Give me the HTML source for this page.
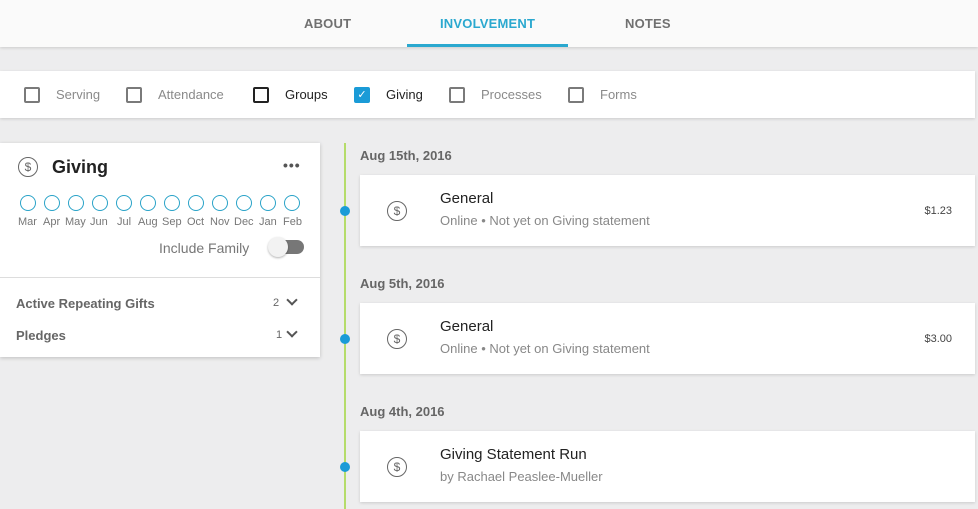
<!DOCTYPE html>
<html><head><style>
*{margin:0;padding:0;box-sizing:border-box}
body{width:978px;height:509px;overflow:hidden;background:#ededee;font-family:"Liberation Sans",sans-serif;position:relative;color:#333}
.abs{position:absolute}
.hdr{left:0;top:0;width:978px;height:47px;background:#fafafa;box-shadow:0 1px 3px rgba(0,0,0,.15)}
.tab{top:16px;font-size:13px;font-weight:bold;color:#707070;letter-spacing:.2px}
.bar{left:0;top:71px;width:975px;height:47px;background:#fff;box-shadow:0 1px 3px rgba(0,0,0,.15)}
.cb{top:87px;width:16px;height:16px;border:2px solid #7a7a7a;border-radius:2px}
.lb{top:87px;font-size:13px;color:#8a8a8a}
.card{left:0;top:143px;width:320px;height:214px;background:#fff;box-shadow:0 1px 4px rgba(0,0,0,.2)}
.dol{width:20px;height:20px;border:1.3px solid #666;border-radius:50%;font-size:12px;line-height:18px;text-align:center;color:#666}
.circ{top:195px;width:16px;height:16px;border:1.5px solid #2aa3c8;border-radius:50%}
.mo{top:216px;font-size:11px;color:#777}
.ev{left:360px;width:615px;height:71px;background:#fff;box-shadow:0 1px 3px rgba(0,0,0,.15)}
.date{left:360px;font-size:13px;font-weight:bold;color:#666}
.dot{left:340px;width:10px;height:10px;border-radius:50%;background:#1a9bd7}
.t1{left:80px;top:15px;font-size:15px;color:#222}
.t2{left:80px;top:38px;font-size:13px;color:#888}
.amt{right:23px;top:30px;font-size:11px;color:#444}
.chev{width:8px;height:8px;border-right:2px solid #555;border-bottom:2px solid #555;transform:rotate(45deg)}
</style></head><body>
<div class="abs hdr"></div>
<div class="abs tab" style="left:304px">ABOUT</div>
<div class="abs tab" style="left:440px;color:#2aa8cf">INVOLVEMENT</div>
<div class="abs tab" style="left:625px">NOTES</div>
<div class="abs" style="left:407px;top:44px;width:161px;height:3px;background:#2aa8cf"></div>

<div class="abs bar"></div>
<div class="abs cb" style="left:24px"></div><div class="abs lb" style="left:56px">Serving</div>
<div class="abs cb" style="left:126px"></div><div class="abs lb" style="left:158px">Attendance</div>
<div class="abs cb" style="left:253px;border-color:#222"></div><div class="abs lb" style="left:285px;color:#222">Groups</div>
<div class="abs cb" style="left:354px;background:#1a9bd7;border-color:#1a9bd7;color:#fff;font-size:11px;line-height:12px;text-align:center">✓</div><div class="abs lb" style="left:386px;color:#222">Giving</div>
<div class="abs cb" style="left:449px"></div><div class="abs lb" style="left:481px">Processes</div>
<div class="abs cb" style="left:568px"></div><div class="abs lb" style="left:600px">Forms</div>

<div class="abs card"></div>
<div class="abs dol" style="left:18px;top:157px">$</div>
<div class="abs" style="left:52px;top:157px;font-size:18px;font-weight:bold;color:#222">Giving</div>
<div class="abs" style="left:283px;top:157px;font-size:14px;font-weight:bold;color:#555;letter-spacing:1px">•••</div>
<div class="abs circ" style="left:20px"></div><div class="abs circ" style="left:44px"></div><div class="abs circ" style="left:68px"></div><div class="abs circ" style="left:92px"></div><div class="abs circ" style="left:116px"></div><div class="abs circ" style="left:140px"></div><div class="abs circ" style="left:164px"></div><div class="abs circ" style="left:188px"></div><div class="abs circ" style="left:212px"></div><div class="abs circ" style="left:236px"></div><div class="abs circ" style="left:260px"></div><div class="abs circ" style="left:284px"></div>
<div class="abs mo" style="left:18px">Mar</div><div class="abs mo" style="left:43px">Apr</div><div class="abs mo" style="left:65px">May</div><div class="abs mo" style="left:90px">Jun</div><div class="abs mo" style="left:117px">Jul</div><div class="abs mo" style="left:138px">Aug</div><div class="abs mo" style="left:162px">Sep</div><div class="abs mo" style="left:187px">Oct</div><div class="abs mo" style="left:210px">Nov</div><div class="abs mo" style="left:234px">Dec</div><div class="abs mo" style="left:259px">Jan</div><div class="abs mo" style="left:283px">Feb</div>
<div class="abs" style="left:159px;top:240px;font-size:14px;color:#777">Include Family</div>
<div class="abs" style="left:270px;top:240px;width:34px;height:14px;border-radius:7px;background:#777"></div>
<div class="abs" style="left:268px;top:237px;width:20px;height:20px;border-radius:50%;background:#f2f2f2;box-shadow:0 1px 2px rgba(0,0,0,.3)"></div>
<div class="abs" style="left:0;top:277px;width:320px;height:1px;background:#ddd"></div>
<div class="abs" style="left:16px;top:296px;font-size:13px;font-weight:bold;color:#666">Active Repeating Gifts</div>
<div class="abs" style="left:273px;top:297px;font-size:11px;color:#666">2</div><div class="abs chev" style="left:288px;top:296px"></div>
<div class="abs" style="left:16px;top:328px;font-size:13px;font-weight:bold;color:#666">Pledges</div>
<div class="abs" style="left:276px;top:329px;font-size:11px;color:#666">1</div><div class="abs chev" style="left:288px;top:328px"></div>

<div class="abs" style="left:344px;top:143px;width:2px;height:366px;background:#b5dc6a"></div>
<div class="abs date" style="top:148px">Aug 15th, 2016</div>
<div class="abs date" style="top:276px">Aug 5th, 2016</div>
<div class="abs date" style="top:404px">Aug 4th, 2016</div>
<div class="abs dot" style="top:206px"></div><div class="abs dot" style="top:334px"></div><div class="abs dot" style="top:462px"></div>

<div class="abs ev" style="top:175px"><div class="abs dol" style="left:27px;top:26px">$</div><div class="abs t1">General</div><div class="abs t2">Online • Not yet on Giving statement</div><div class="abs amt">$1.23</div></div>
<div class="abs ev" style="top:303px"><div class="abs dol" style="left:27px;top:26px">$</div><div class="abs t1">General</div><div class="abs t2">Online • Not yet on Giving statement</div><div class="abs amt">$3.00</div></div>
<div class="abs ev" style="top:431px"><div class="abs dol" style="left:27px;top:26px">$</div><div class="abs t1">Giving Statement Run</div><div class="abs t2">by Rachael Peaslee-Mueller</div></div>
</body></html>
